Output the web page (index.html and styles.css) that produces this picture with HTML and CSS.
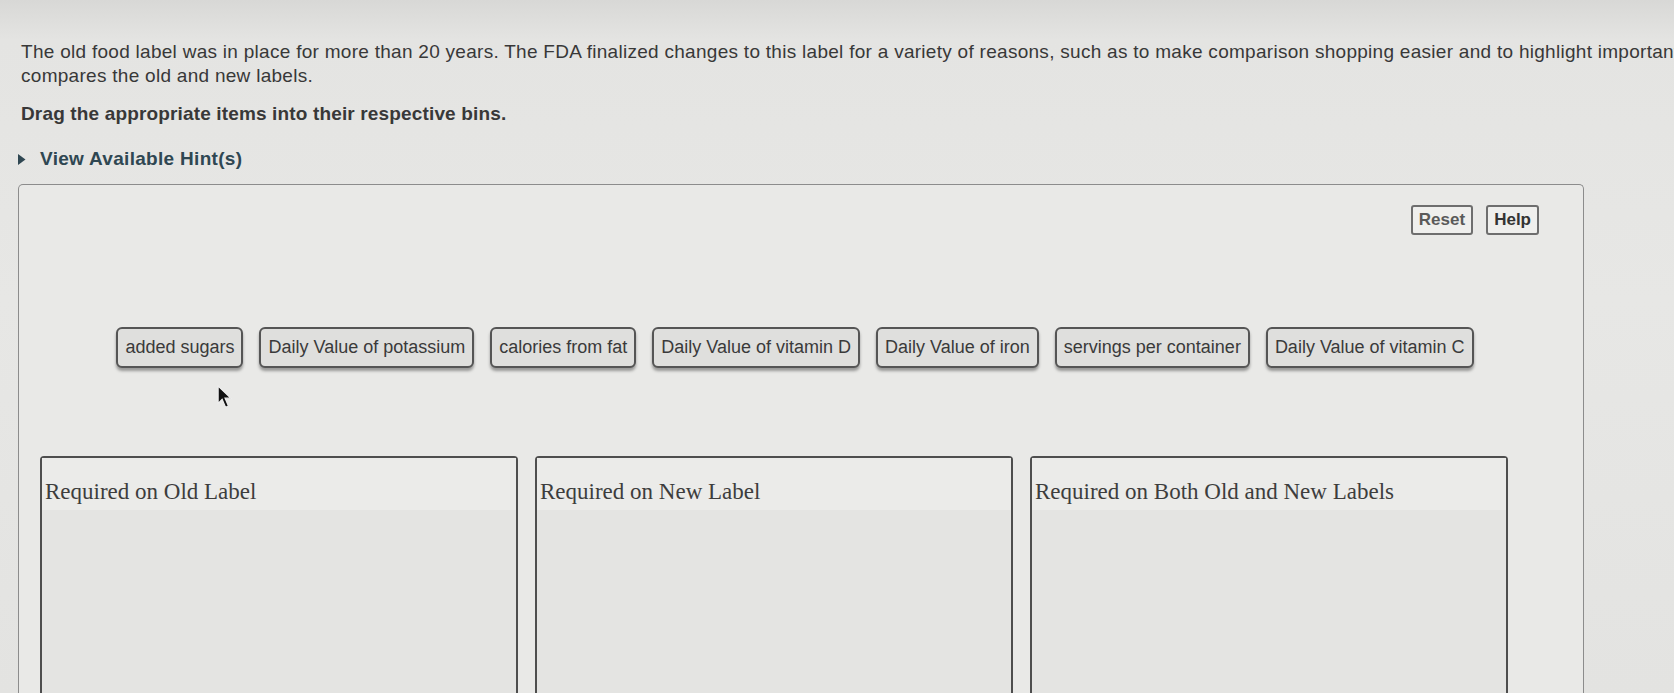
FILE: index.html
```html
<!DOCTYPE html>
<html lang="en">

<head>
  <meta charset="UTF-8">
  <title>Food Labels</title>
  <link rel="stylesheet" href="styles.css">
</head>

<body>
  <p class="intro">The old food label was in place for more than 20 years. The FDA finalized changes to this label for a variety of reasons, such as to make comparison shopping easier and to highlight important nutrients. This activity compares the old and new labels.</p>
  <p class="task">Drag the appropriate items into their respective bins.</p>
  <div class="hints">
    <svg class="caret" width="9" height="13" viewBox="0 0 9 13"><path d="M1 1 L8.5 6.5 L1 12 Z" fill="#2f4752"/></svg>
    <span>View Available Hint(s)</span>
  </div>

  <div class="activity">
    <div class="toolbar">
      <button type="button" class="btn btn-reset">Reset</button>
      <button type="button" class="btn btn-help">Help</button>
    </div>

    <div class="tokens">
      <div class="token">added sugars</div>
      <div class="token">Daily Value of potassium</div>
      <div class="token">calories from fat</div>
      <div class="token">Daily Value of vitamin D</div>
      <div class="token">Daily Value of iron</div>
      <div class="token">servings per container</div>
      <div class="token">Daily Value of vitamin C</div>
    </div>

    <div class="bins">
      <div class="bin">
        <div class="bin-title">Required on Old Label</div>
        <div class="bin-body"></div>
      </div>
      <div class="bin">
        <div class="bin-title">Required on New Label</div>
        <div class="bin-body"></div>
      </div>
      <div class="bin">
        <div class="bin-title">Required on Both Old and New Labels</div>
        <div class="bin-body"></div>
      </div>
    </div>

    <!-- mouse pointer -->
    <svg class="pointer" width="16" height="24" viewBox="0 0 14 21">
      <path d="M1 1 L1 16 L4.5 12.5 L7.5 19.5 L10 18.4 L7 11.5 L12 11.5 Z" fill="#111" stroke="#eee" stroke-width="1"/>
    </svg>
  </div>
</body>

</html>
```

FILE: styles.css
```css
html,
body {
  overflow: hidden;
}

body {
  font-family: 'Liberation Sans', Arial, sans-serif;
  color: #383838;
  background: linear-gradient(to bottom, #d8d8d6 0px, #e4e4e2 40px, #e7e7e5 300px, #e3e3e1 693px);
  margin: 0;
  padding: 0;
  width: 1674px;
  height: 693px;
}

*,
*:before,
*:after {
  box-sizing: border-box;
}

.intro {
  width: 1888px;
  font-size: 19px;
  letter-spacing: 0.28px;
  line-height: 24px;
  margin: 40px 0 0;
  padding-left: 21px;
}

.task {
  font-size: 19px;
  font-weight: bold;
  letter-spacing: 0.15px;
  line-height: 24px;
  margin: 14px 0 0;
  padding-left: 21px;
}

.hints {
  display: flex;
  align-items: center;
  gap: 14px;
  margin-top: 21px;
  padding-left: 17px;
  height: 24px;
  font-size: 19px;
  font-weight: bold;
  letter-spacing: 0.3px;
  color: #2f4752;
}

.activity {
  position: relative;
  margin: 13px 0 0 18px;
  width: 1566px;
  border: 1px solid #8c8c8c;
  border-bottom: none;
  border-radius: 5px 5px 0 0;
  background: #e9e9e7;
  padding-bottom: 20px;
}

.toolbar {
  display: flex;
  justify-content: flex-end;
  gap: 13px;
  padding: 20px 44px 0 0;
}

.btn {
  font-family: 'Liberation Sans', Arial, sans-serif;
  font-size: 17px;
  font-weight: bold;
  height: 30px;
  padding: 0 6px;
  background: #efefed;
  border: 2px solid #6e6e6e;
  border-radius: 3px;
  cursor: pointer;
}

.btn-reset {
  color: #5a5a5a;
}

.btn-help {
  color: #333;
}

.tokens {
  display: flex;
  justify-content: center;
  gap: 16px;
  margin-top: 92px;
  padding-right: 12px;
}

.token {
  height: 41px;
  display: flex;
  align-items: center;
  padding: 0 7px;
  font-size: 18px;
  color: #3a3a3a;
  background: #dfdfdd;
  border: 2px solid #555;
  border-radius: 6px;
  box-shadow: 0 3px 3px rgba(0, 0, 0, 0.35);
  cursor: move;
}

.bins {
  display: flex;
  gap: 17px;
  margin-top: 88px;
  padding-left: 21px;
}

.bin {
  width: 478px;
  height: 300px;
  border: 2px solid #4e4e4e;
  border-bottom: none;
  border-radius: 4px 4px 0 0;
  display: flex;
  flex-direction: column;
}

.bin-title {
  height: 52px;
  padding: 21px 0 0 3px;
  font-family: 'Liberation Serif', 'Times New Roman', serif;
  font-size: 23px;
  line-height: 26px;
  color: #3d3d3d;
  background: #ebebe9;
}

.bin-body {
  flex: 1;
  background: #e4e4e2;
}

.pointer {
  position: absolute;
  left: 198px;
  top: 200px;
}
```
